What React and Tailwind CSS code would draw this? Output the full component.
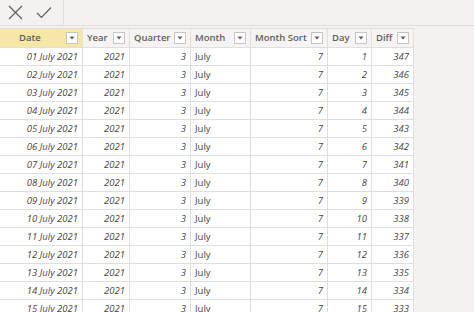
import React from "react";

const cols = [
  { name: "Date", w: 83 },
  { name: "Year", w: 47 },
  { name: "Quarter", w: 61 },
  { name: "Month", w: 60 },
  { name: "Month Sort", w: 77 },
  { name: "Day", w: 44 },
  { name: "Diff", w: 42 },
];

const rows = Array.from({ length: 15 }, (_, i) => {
  const d = i + 1;
  return [
    `${String(d).padStart(2, "0")} July 2021`,
    "2021",
    "3",
    "July",
    "7",
    String(d),
    String(348 - d),
  ];
});

function FilterBtn() {
  return (
    <div className="w-[12px] h-[12px] bg-white border border-[#c8c6c4] flex items-center justify-center shrink-0">
      <svg width="6" height="4" viewBox="0 0 6 4">
        <path d="M0.5 0.5 L5.5 0.5 L3 3.5 Z" fill="#605e5c" />
      </svg>
    </div>
  );
}

export default function App() {
  const template = "83px 47px 61px 60px 77px 44px 42px";
  return (
    <div
      className="w-[474px] h-[312px] overflow-hidden bg-[#f3f2f1]"
      style={{ fontFamily: '"Open Sans", "Noto Sans", sans-serif' }}
    >
      <div className="h-[26px] flex items-stretch border-b border-[#e1dfdd]">
        <div className="w-[64px] flex items-center pl-[8px] gap-[13px] border-r border-[#e1dfdd]">
          <svg width="15" height="15" viewBox="0 0 15 15">
            <path d="M1 1 L14 14 M14 1 L1 14" stroke="#605e5c" strokeWidth="1.2" fill="none" />
          </svg>
          <svg width="16" height="13" viewBox="0 0 16 13">
            <path d="M1 7 L5.5 11.5 L15 1.5" stroke="#605e5c" strokeWidth="1.2" fill="none" />
          </svg>
        </div>
        <div className="flex-1" />
      </div>
      <div className="pt-[2px]">
        <div className="grid w-[414px]" style={{ gridTemplateColumns: template }}>
          {cols.map((c, i) => (
            <div
              key={c.name}
              className={`h-[20px] flex items-center justify-between pr-[4px] border-r border-b border-t border-[#e1dfdd] text-[9.5px] font-semibold text-[#605e5c] ${
                i === 0 ? "bg-[#f7e7a6] pl-[19px]" : "bg-[#f5f4f3] pl-[4px]"
              }`}
            >
              <span className="leading-none whitespace-nowrap">{c.name}</span>
              <FilterBtn />
            </div>
          ))}
          {rows.map((r, ri) =>
            r.map((v, ci) => (
              <div
                key={ri + "-" + ci}
                className={`h-[18px] bg-white border-r border-b border-[#e1dfdd] flex items-center text-[9.5px] text-[#484644] px-[4px] ${
                  ci === 3 ? "justify-start" : "justify-end italic"
                }`}
              >
                <span className="leading-none whitespace-nowrap">{v}</span>
              </div>
            ))
          )}
        </div>
      </div>
    </div>
  );
}
